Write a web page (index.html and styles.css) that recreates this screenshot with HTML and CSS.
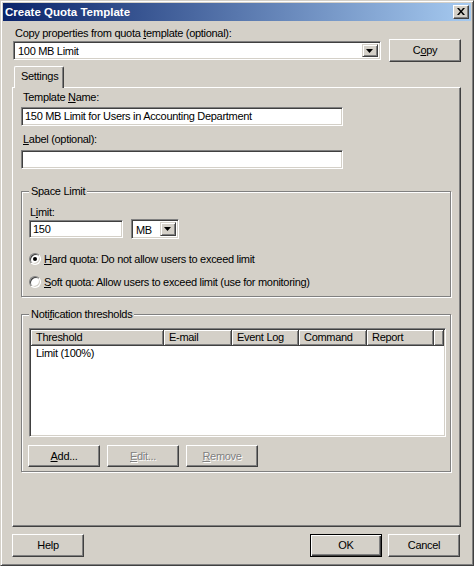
FILE: index.html
```html
<!DOCTYPE html>
<html>
<head>
<meta charset="utf-8">
<title>Create Quota Template</title>
<link rel="stylesheet" href="styles.css">
</head>
<body>
<div class="window">
  <div class="titlebar">
    <span class="title">Create Quota Template</span>
    <span class="close"><svg width="8" height="7" viewBox="0 0 8 7"><path d="M0 0h2l2 2.4L6 0h2L5 3.5 8 7H6L4 4.6 2 7H0l3-3.5z" fill="#000"/></svg></span>
  </div>
  <div class="content">
    <div class="label top-label">Copy properties from quota <u>t</u>emplate (optional):</div>
    <div class="copy-row">
      <div class="combo combo-wide">
        <span class="combo-val">100 MB Limit</span>
        <span class="drop"><svg width="7" height="4" viewBox="0 0 7 4"><path d="M0 0h7L3.5 4z" fill="#000"/></svg></span>
      </div>
      <button class="btn">C<u>o</u>py</button>
    </div>
    <div class="tabs"><div class="tab">Settings</div></div>
    <div class="panel">
      <div class="label name-label">Template <u>N</u>ame:</div>
      <div class="field input-wide">150 MB Limit for Users in Accounting Department</div>
      <div class="label opt-label"><u>L</u>abel (optional):</div>
      <div class="field input-wide"></div>
      <fieldset class="group space">
        <legend>Space Limit</legend>
        <div class="label limit-label">L<u>i</u>mit:</div>
        <div class="limit-row">
          <div class="field input-limit">150</div>
          <div class="combo combo-unit">
            <span class="combo-val">MB</span>
            <span class="drop"><svg width="7" height="4" viewBox="0 0 7 4"><path d="M0 0h7L3.5 4z" fill="#000"/></svg></span>
          </div>
        </div>
        <div class="radio-row hard"><span class="radio checked"></span><span class="radio-text"><u>H</u>ard quota: Do not allow users to exceed limit</span></div>
        <div class="radio-row soft"><span class="radio"></span><span class="radio-text"><u>S</u>oft quota: Allow users to exceed limit (use for monitoring)</span></div>
      </fieldset>
      <fieldset class="group notif">
        <legend>Noti<u>f</u>ication thresholds</legend>
        <div class="listview">
          <div class="lv-head">
            <div class="hcell col-threshold">Threshold</div>
            <div class="hcell col-email">E-mail</div>
            <div class="hcell col-event">Event Log</div>
            <div class="hcell col-command">Command</div>
            <div class="hcell col-report">Report</div>
            <div class="hcell col-rest"></div>
          </div>
          <div class="lv-row">Limit (100%)</div>
        </div>
        <div class="btn-row">
          <button class="btn small"><u>A</u>dd...</button>
          <button class="btn small disabled"><u>E</u>dit...</button>
          <button class="btn small disabled"><u>R</u>emove</button>
        </div>
      </fieldset>
    </div>
    <div class="footer">
      <button class="btn">Help</button>
      <div class="footer-right">
        <button class="btn default">OK</button>
        <button class="btn">Cancel</button>
      </div>
    </div>
  </div>
</div>
</body>
</html>
```
FILE: styles.css
```css
* { box-sizing: border-box; }
html, body { margin: 0; padding: 0; background: #d4d0c8; }
body {
  font-family: "Liberation Sans", Arial, sans-serif;
  font-size: 11px;
  letter-spacing: -0.3px;
  color: #000;
}
u { text-decoration: underline; text-underline-offset: 1px; }

.window {
  width: 474px;
  height: 566px;
  background: #d4d0c8;
  border: 1px solid;
  border-color: #d4d0c8 #404040 #404040 #d4d0c8;
  box-shadow: inset 1px 1px #fff, inset -1px -1px #808080;
  padding: 2px;
}

.titlebar {
  height: 18px;
  background: linear-gradient(to right, #0a246a, #a6caf0);
  display: flex;
  align-items: center;
  justify-content: space-between;
  padding: 0 2px 0 2px;
}
.title {
  color: #fff;
  font-weight: bold;
  font-size: 11.5px;
  letter-spacing: 0;
  padding-left: 0;
}
.close {
  width: 16px;
  height: 14px;
  background: #d4d0c8;
  border: 1px solid;
  border-color: #fff #404040 #404040 #fff;
  box-shadow: inset -1px -1px #808080;
  display: flex;
  align-items: center;
  justify-content: center;
  padding: 0 1px 1px 0;
}
.close svg { display: block; }

.content {
  padding: 0 10px 0 9px;
}

.label { line-height: 12px; white-space: nowrap; }
.top-label { margin-top: 6px; padding-left: 3px; }

.copy-row {
  display: flex;
  align-items: center;
  height: 23px;
}

.field {
  background: #fff;
  border: 1px solid;
  border-color: #808080 #fff #fff #808080;
  box-shadow: inset 1px 1px #404040, inset -1px -1px #d4d0c8;
  white-space: nowrap;
}

.combo {
  background: #fff;
  border: 1px solid;
  border-color: #808080 #fff #fff #808080;
  box-shadow: inset 1px 1px #404040, inset -1px -1px #d4d0c8;
  display: flex;
  align-items: stretch;
  padding: 2px;
}
.combo-val { flex: 1; padding-left: 2px; line-height: 15px; white-space: nowrap; }
.drop {
  width: 16px;
  background: #d4d0c8;
  border: 1px solid;
  border-color: #d4d0c8 #404040 #404040 #d4d0c8;
  box-shadow: inset 1px 1px #fff, inset -1px -1px #808080;
  display: flex;
  align-items: center;
  justify-content: center;
  padding-right: 1px;
}
.drop svg { display: block; }

.combo-wide {
  width: 368px;
  height: 19px;
  margin-left: 1px;
  margin-right: 8px;
}

.btn {
  font: inherit;
  letter-spacing: inherit;
  color: #000;
  width: 72px;
  height: 23px;
  padding: 0;
  margin: 0;
  background: #d4d0c8;
  border: 1px solid;
  border-color: #fff #404040 #404040 #fff;
  box-shadow: inset -1px -1px #808080;
  border-radius: 0;
  text-align: center;
  line-height: 19px;
}
.btn.small { height: 22px; line-height: 18px; }
.btn.disabled { color: #808080; text-shadow: 1px 1px #fff; }
.btn.default {
  border: 1px solid #000;
  box-shadow: inset 1px 1px #fff, inset -1px -1px #404040, inset -2px -2px #808080;
}

.tabs {
  display: flex;
  margin-top: 4px;
  padding-left: 2px;
  position: relative;
  z-index: 1;
  margin-bottom: -1px;
}
.tab {
  width: 50px;
  height: 22px;
  background: #d4d0c8;
  border-top: 1px solid #fff;
  border-left: 1px solid #fff;
  border-right: 1px solid #404040;
  box-shadow: inset -1px 0 #808080;
  border-radius: 2px 2px 0 0;
  padding-left: 6px;
  line-height: 19px;
}

.panel {
  height: 440px;
  border: 1px solid;
  border-color: #fff #404040 #404040 #fff;
  box-shadow: inset -1px -1px #808080;
  padding: 0 9px 0 8px;
}
.name-label { margin-top: 3px; padding-left: 2px; }
.input-wide {
  width: 322px;
  height: 19px;
  line-height: 17px;
  padding: 0 3px;
}
.name-label + .input-wide { margin-top: 4px; }
.opt-label { margin-top: 7px; padding-left: 2px; }
.opt-label + .input-wide { margin-top: 5px; }

.group {
  margin: 0;
  min-width: 0;
  border: 1px solid #808080;
  box-shadow: inset 1px 1px #fff, 1px 1px #fff;
  padding: 0 4px 8px 7px;
}
.group legend {
  padding: 0 2px;
  margin-left: 0;
  line-height: 12px;
  background: #d4d0c8;
  position: relative;
}
.space { margin-top: 16px; }
.limit-label { margin-top: 9px; padding-left: 1px; }
.limit-row {
  display: flex;
  align-items: center;
  height: 20px;
  margin-top: 1px;
}
.input-limit {
  width: 94px;
  height: 18px;
  line-height: 16px;
  padding: 0 3px;
  margin-right: 8px;
}
.combo-unit {
  width: 48px;
  height: 20px;
}
.combo-unit .combo-val { line-height: 16px; }

.radio-row {
  display: flex;
  align-items: center;
  height: 12px;
}
.hard { margin-top: 14px; }
.soft { margin-top: 11px; }
.radio {
  width: 12px;
  height: 12px;
  border-radius: 50%;
  background: #fff;
  border: 1px solid;
  border-color: #808080 #fff #fff #808080;
  box-shadow: inset 1px 1px #404040, inset -1px -1px #d4d0c8;
  display: flex;
  align-items: center;
  justify-content: center;
  margin-right: 3px;
  flex: none;
}
.radio.checked::after {
  content: "";
  width: 4px;
  height: 4px;
  border-radius: 50%;
  background: #000;
}
.radio-text { line-height: 12px; white-space: nowrap; }

.notif { margin-top: 11px; padding-bottom: 4px; }
.listview {
  margin-top: 8px;
  width: 417px;
  height: 109px;
  background: #fff;
  border: 1px solid;
  border-color: #808080 #fff #fff #808080;
  box-shadow: inset 1px 1px #404040, inset -1px -1px #d4d0c8;
  padding: 1px;
}
.lv-head { display: flex; height: 16px; }
.hcell {
  height: 16px;
  background: #d4d0c8;
  border-right: 1px solid #404040;
  border-bottom: 1px solid #404040;
  box-shadow: inset 1px 1px #fff, inset -1px -1px #808080;
  padding-left: 5px;
  line-height: 15px;
  white-space: nowrap;
}
.col-threshold { width: 133px; }
.col-email { width: 68px; }
.col-event { width: 67px; }
.col-command { width: 68px; }
.col-report { width: 67px; }
.col-rest { flex: 1; }
.lv-row { padding-left: 5px; line-height: 13px; margin-top: 1px; }

.btn-row {
  display: flex;
  gap: 7px;
  margin-top: 8px;
  margin-left: -1px;
}

.footer {
  display: flex;
  justify-content: space-between;
  margin-top: 7px;
  padding-left: 0;
  padding-right: 1px;
}
.footer-right { display: flex; gap: 6px; }
```
